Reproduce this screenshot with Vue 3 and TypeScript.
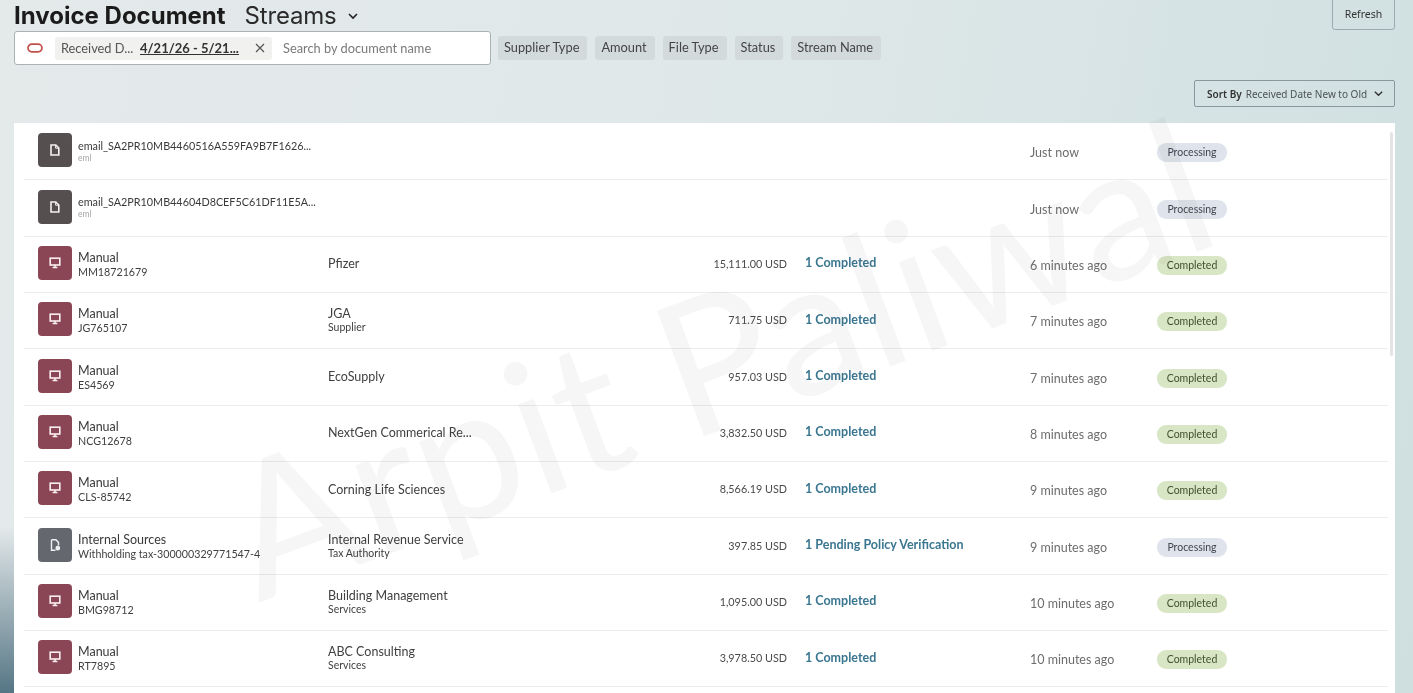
<script setup lang="ts">
interface DocRow {
  kind: 'email' | 'manual' | 'internal'
  name: string
  sub: string
  supplier?: string
  supplierType?: string
  amount?: string
  stream?: string
  time: string
  status: 'Processing' | 'Completed'
}

const filters = ['Supplier Type', 'Amount', 'File Type', 'Status', 'Stream Name']

const rows: DocRow[] = [
  { kind: 'email', name: 'email_SA2PR10MB4460516A559FA9B7F1626...', sub: 'eml', time: 'Just now', status: 'Processing' },
  { kind: 'email', name: 'email_SA2PR10MB44604D8CEF5C61DF11E5A...', sub: 'eml', time: 'Just now', status: 'Processing' },
  { kind: 'manual', name: 'Manual', sub: 'MM18721679', supplier: 'Pfizer', amount: '15,111.00 USD', stream: '1 Completed', time: '6 minutes ago', status: 'Completed' },
  { kind: 'manual', name: 'Manual', sub: 'JG765107', supplier: 'JGA', supplierType: 'Supplier', amount: '711.75 USD', stream: '1 Completed', time: '7 minutes ago', status: 'Completed' },
  { kind: 'manual', name: 'Manual', sub: 'ES4569', supplier: 'EcoSupply', amount: '957.03 USD', stream: '1 Completed', time: '7 minutes ago', status: 'Completed' },
  { kind: 'manual', name: 'Manual', sub: 'NCG12678', supplier: 'NextGen Commerical Re...', amount: '3,832.50 USD', stream: '1 Completed', time: '8 minutes ago', status: 'Completed' },
  { kind: 'manual', name: 'Manual', sub: 'CLS-85742', supplier: 'Corning Life Sciences', amount: '8,566.19 USD', stream: '1 Completed', time: '9 minutes ago', status: 'Completed' },
  { kind: 'internal', name: 'Internal Sources', sub: 'Withholding tax-300000329771547-4', supplier: 'Internal Revenue Service', supplierType: 'Tax Authority', amount: '397.85 USD', stream: '1 Pending Policy Verification', time: '9 minutes ago', status: 'Processing' },
  { kind: 'manual', name: 'Manual', sub: 'BMG98712', supplier: 'Building Management', supplierType: 'Services', amount: '1,095.00 USD', stream: '1 Completed', time: '10 minutes ago', status: 'Completed' },
  { kind: 'manual', name: 'Manual', sub: 'RT7895', supplier: 'ABC Consulting', supplierType: 'Services', amount: '3,978.50 USD', stream: '1 Completed', time: '10 minutes ago', status: 'Completed' },
]
</script>

<template>
  <div class="page">
    <header class="top">
      <h1 class="title">Invoice Document</h1>
      <div class="streams">
        <span>Streams</span>
        <svg viewBox="0 0 12 12" width="12" height="12" fill="none" stroke="#222" stroke-width="1.6">
          <path d="M2 4l4 4 4-4" />
        </svg>
      </div>
      <button class="refresh">Refresh</button>
    </header>

    <div class="filters">
      <div class="search">
        <svg class="oracle" viewBox="0 0 16 10" width="16" height="10" fill="none" stroke="#c0504a" stroke-width="1.7">
          <rect x="1" y="1.2" width="14" height="7.6" rx="3.8" />
        </svg>
        <div class="date-chip">
          <span class="chip-label">Received D...</span>
          <span class="chip-value">4/21/26 - 5/21...</span>
          <svg viewBox="0 0 12 12" width="12" height="12" fill="none" stroke="#555" stroke-width="1.2">
            <path d="M2 2l8 8M10 2l-8 8" />
          </svg>
        </div>
        <span class="placeholder">Search by document name</span>
      </div>
      <span v-for="f in filters" :key="f" class="filter-chip">{{ f }}</span>
    </div>

    <div class="sort-row">
      <button class="sort">
        <b>Sort By</b>
        <span>Received Date New to Old</span>
        <svg viewBox="0 0 12 12" width="11" height="11" fill="none" stroke="#333" stroke-width="1.5">
          <path d="M2 4l4 4 4-4" />
        </svg>
      </button>
    </div>

    <section class="list">
      <div v-for="row in rows" :key="row.sub + row.name" class="row">
        <div class="doc">
          <span class="icon" :class="row.kind">
            <svg v-if="row.kind === 'manual'" viewBox="0 0 14 14" width="14" height="14" fill="none" stroke="#fbeef0" stroke-width="1.6">
              <rect x="2.2" y="2.2" width="9.6" height="6.8" />
              <path d="M7 9v2.2M4.6 11.5h4.8" />
            </svg>
            <svg v-else-if="row.kind === 'email'" viewBox="0 0 14 14" width="14" height="14" fill="none" stroke="#f6f1f1" stroke-width="1.6">
              <path d="M3 2h4.8l3 3v7H3z" />
              <path d="M7.6 2v3.2h3.2" stroke-width="1" />
            </svg>
            <svg v-else viewBox="0 0 14 14" width="14" height="14" fill="none" stroke="#eef0f3" stroke-width="1.4">
              <path d="M3.5 1.8h4.4l2.6 2.6v3.2M3.5 1.8v10.4h4" />
              <circle cx="9.8" cy="10.2" r="1.7" fill="#eef0f3" />
            </svg>
          </span>
          <div class="doc-text" :class="{ small: row.kind === 'email' }">
            <div class="doc-name">{{ row.name }}</div>
            <div class="doc-sub">{{ row.sub }}</div>
          </div>
        </div>
        <div class="supplier">
          <div v-if="row.supplier" class="supplier-name">{{ row.supplier }}</div>
          <div v-if="row.supplierType" class="supplier-type">{{ row.supplierType }}</div>
        </div>
        <div class="amount">{{ row.amount }}</div>
        <a class="stream">{{ row.stream }}</a>
        <div class="time">{{ row.time }}</div>
        <div class="status">
          <span class="badge" :class="row.status.toLowerCase()">{{ row.status }}</span>
        </div>
      </div>
      <span class="scrollbar"></span>
    </section>

    <div class="watermark">Arpit Paliwal</div>
  </div>
</template>

<style>
html,
body {
  margin: 0;
  overflow: hidden;
}
</style>

<style scoped>
.page {
  position: relative;
  height: 693px;
  overflow: hidden;
  box-sizing: border-box;
  font-family: Lato, "Noto Sans", sans-serif;
  color: #2b2b2b;
  filter: blur(0.35px);
  background:
    linear-gradient(180deg, rgba(70, 105, 122, 0) 76%, rgba(70, 105, 122, 0.9) 100%) left / 14px 100% no-repeat,
    linear-gradient(100deg, #e4e9ea 0%, #dfe8e9 50%, #cfdfe0 100%);
}

.top {
  display: flex;
  align-items: center;
  height: 30px;
  padding: 0 18px 0 14px;
}

.title {
  margin: 2px 0 0;
  font-family: Inter, "Noto Sans", sans-serif;
  font-size: 24px;
  line-height: 28px;
  font-weight: 700;
  letter-spacing: 0;
  color: #1b1b1b;
  white-space: nowrap;
}

.streams {
  display: flex;
  align-items: center;
  gap: 11px;
  margin: 2px 0 0 19px;
  font-family: Inter, "Noto Sans", sans-serif;
  font-size: 24px;
  line-height: 28px;
  letter-spacing: -0.2px;
  color: #2a2a2a;
}

.refresh {
  margin-left: auto;
  width: 63px;
  height: 32px;
  margin-top: -2px;
  border: 1px solid #9eaaae;
  border-radius: 0 0 3px 3px;
  background: transparent;
  font: 10.5px "Noto Sans", sans-serif;
  color: #333;
}

.filters {
  display: flex;
  align-items: center;
  gap: 8px;
  margin: 1px 0 0 14px;
}

.search {
  display: flex;
  align-items: center;
  box-sizing: border-box;
  width: 477px;
  height: 34px;
  margin-right: -1px;
  padding: 0 12px;
  background: #fff;
  border: 1px solid #aab2b5;
  border-radius: 3px;
  font-size: 12.8px;
}

.date-chip {
  display: flex;
  align-items: center;
  height: 23px;
  margin-left: 12px;
  padding: 0 6px;
  background: #f1f1f0;
  border-radius: 3px;
  color: #555;
  white-space: nowrap;
}

.chip-label {
  width: 79px;
}

.chip-value {
  width: 114px;
  font-size: 13px;
  font-weight: 700;
  color: #333;
  text-decoration: underline;
}

.placeholder {
  margin-left: 11px;
  color: #77797b;
}

.filter-chip {
  padding: 0 8px 0 6px;
  height: 24px;
  line-height: 23px;
  background: #d2dadb;
  border-radius: 3px;
  font-size: 12.8px;
  color: #444;
}

.sort-row {
  display: flex;
  justify-content: flex-end;
  margin: 15px 18px 16px 0;
}

.sort {
  display: flex;
  align-items: center;
  box-sizing: border-box;
  width: 201px;
  height: 27px;
  padding: 0 10px 0 12px;
  background: transparent;
  border: 1px solid #8a979c;
  border-radius: 2px;
  font: 10px "Noto Sans", sans-serif;
  color: #4b5356;
  white-space: nowrap;
}

.sort b {
  margin-right: 4px;
  font-weight: 600;
  color: #333;
}

.sort svg {
  margin-left: auto;
}

.list {
  position: relative;
  margin: 0 18px 0 14px;
  background: #fff;
  height: 570px;
  box-sizing: border-box;
  padding: 1px 7px 0 10px;
}

.row {
  display: grid;
  grid-template-columns: 290px 1fr 120px 243px 127px 231px;
  align-items: center;
  height: 56.35px;
  box-sizing: border-box;
  padding: 0 0 3px 14px;
  border-bottom: 1px solid #ececec;
}

.doc {
  display: flex;
  align-items: center;
  gap: 6px;
}

.icon {
  display: flex;
  align-items: center;
  justify-content: center;
  flex: none;
  width: 34px;
  height: 34px;
  border-radius: 4px;
}

.icon.email {
  background: #564f4f;
}

.icon.manual {
  background: #8a4655;
}

.icon.internal {
  background: #65676e;
}

.doc-text {
  margin-top: 2px;
}

.doc-name {
  font-size: 12.5px;
  line-height: 15px;
  color: #3a3a3a;
  white-space: nowrap;
}

.doc-sub {
  font-size: 10.7px;
  line-height: 13px;
  color: #3f3f3f;
  white-space: nowrap;
}

.doc-text.small .doc-name {
  font-size: 10.8px;
  line-height: 13px;
}

.doc-text.small .doc-sub {
  font-size: 8.5px;
  line-height: 12px;
  color: #a5a5a5;
}

.supplier {
  margin-top: 2px;
}

.supplier-name {
  font-size: 12.5px;
  line-height: 15px;
  color: #3f3f3f;
  white-space: nowrap;
}

.supplier-type {
  font-size: 10.5px;
  line-height: 13px;
  color: #3f3f3f;
}

.amount {
  margin-left: -60px;
  margin-top: 1px;
  text-align: right;
  font-size: 10.8px;
  color: #4a4a4a;
  white-space: nowrap;
}

.stream {
  padding-left: 18px;
  font-size: 12.5px;
  font-weight: 700;
  color: #3a7690;
  white-space: nowrap;
}

.time {
  margin-top: 5px;
  font-size: 12.5px;
  color: #6d6d6d;
}

.status {
  display: flex;
  margin-top: 5px;
}

.badge {
  display: inline-block;
  box-sizing: border-box;
  width: 70px;
  height: 19px;
  line-height: 19px;
  text-align: center;
  border-radius: 9px;
  font-size: 10.5px;
  color: #3d4650;
}

.badge.processing {
  background: #dfe4ec;
}

.badge.completed {
  background: #d9e6c5;
  color: #3f4e2f;
}

.scrollbar {
  position: absolute;
  top: 9px;
  right: 2px;
  width: 3px;
  height: 224px;
  border-radius: 2px;
  background: #e4e4e4;
}

.watermark {
  position: absolute;
  left: 258px;
  top: 437px;
  font-family: Lato, sans-serif;
  font-size: 187px;
  line-height: 1;
  font-weight: 400;
  white-space: nowrap;
  color: rgba(70, 70, 70, 0.048);
  transform: rotate(-20.5deg);
  transform-origin: 0 88.7%;
  pointer-events: none;
}
</style>
